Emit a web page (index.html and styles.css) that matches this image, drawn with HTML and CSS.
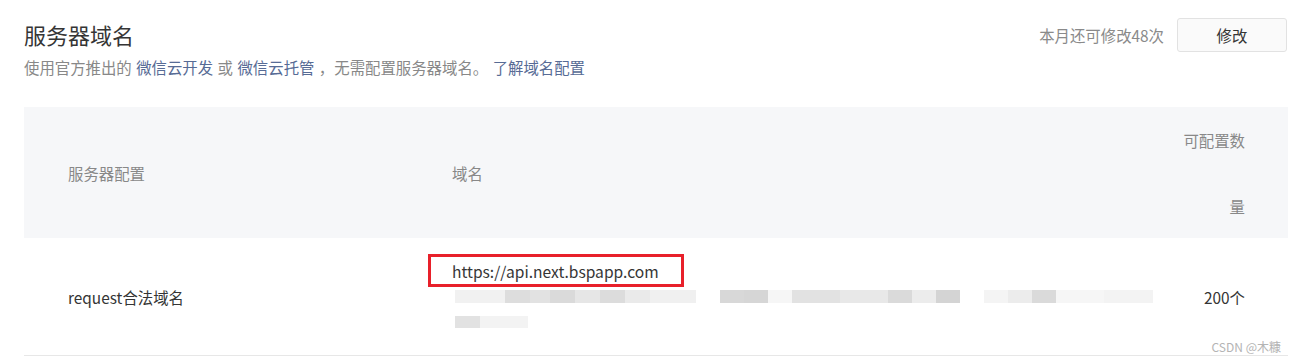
FILE: index.html
```html
<!DOCTYPE html>
<html lang="zh-CN">
<head>
<meta charset="utf-8">
<title>服务器域名</title>
<link rel="stylesheet" href="styles.css">
</head>
<body>
<div class="page">
  <div class="head">
    <div class="head-main">
      <h2 class="title">服务器域名</h2>
      <p class="desc">使用官方推出的 <a class="link">微信云开发</a> 或 <a class="link">微信云托管</a> ，无需配置服务器域名。 <a class="link">了解域名配置</a></p>
    </div>
    <div class="head-ops">
      <span class="quota">本月还可修改48次</span>
      <button class="btn">修改</button>
    </div>
  </div>

  <div class="table">
    <div class="row thead">
      <div class="cell c1">服务器配置</div>
      <div class="cell c2">域名</div>
      <div class="cell c3 wrap">可配置数量</div>
    </div>
    <div class="row tbody">
      <div class="cell c1">request合法域名</div>
      <div class="cell c2">
        <div class="domains">
          <div class="domain"><span class="mark">https://api.next.bspapp.com</span></div>
          <div class="domain"><span class="blur blur-a"></span></div>
          <div class="domain"><span class="blur blur-b"></span></div>
        </div>
      </div>
      <div class="cell c3">200个</div>
    </div>
    <div class="watermark">CSDN @木糠</div>
  </div>
</div>
</body>
</html>
```

FILE: styles.css
```css
* { box-sizing: border-box; }
html, body { margin: 0; padding: 0; background: #fff; }
body {
  font-family: "Noto Sans CJK SC", "Noto Sans", sans-serif;
  color: #353535;
  font-size: 15.4px;
}
.page { padding: 17px 2px 0 24px; }

.head { display: flex; justify-content: space-between; align-items: flex-start; }
.title {
  margin: 0;
  font-size: 22px;
  font-weight: normal;
  line-height: 34px;
  color: #353535;
}
.desc {
  margin: 5px 0 0;
  font-size: 15.4px;
  line-height: 22px;
  color: #888;
  word-spacing: 1px;
}
.link { color: #576b95; text-decoration: none; }

.head-ops { display: flex; align-items: center; gap: 13px; padding-top: 1px; }
.quota { color: #8a8a8a; font-size: 15.4px; }
.btn {
  width: 110px;
  height: 34px;
  margin-right: 1px;
  border: 1px solid #e2e2e2;
  border-radius: 3px;
  background: #fafafa;
  color: #353535;
  font-family: inherit;
  font-size: 15.4px;
  padding: 0;
}

.table { position: relative; margin-top: 29px; }
.row {
  display: grid;
  grid-template-columns: 384px 1fr 116px;
}
.thead { background: #f6f7f9; height: 131px; color: #888; }
.tbody { height: 118px; border-bottom: 1px solid #e7e7e7; }
.cell { display: flex; align-items: center; }
.c1 { padding-left: 44px; }
.c2 { padding-left: 44px; }
.c3 { padding: 0 43px 0 10px; justify-content: flex-end; text-align: right; }
.wrap { line-height: 66px; word-break: break-all; }

.domains { display: flex; flex-direction: column; }
.domain { height: 25px; line-height: 25px; display: flex; align-items: center; }
.mark {
  position: relative;
  font-size: 15.6px;
  color: #353535;
}
.mark::after {
  content: "";
  position: absolute;
  left: -24px;
  right: -25px;
  top: -5px;
  bottom: -3px;
  border: 3px solid #e8202a;
}
.blur { display: block; height: 13px; }
.blur-a {
  width: 698px;
  margin-left: 3px;
  background: linear-gradient(to right,
    #f1f1f1 0, #f1f1f1 50px,
    #dddddd 50px, #dddddd 75px,
    #e2e2e2 75px, #e2e2e2 95px,
    #dadada 95px, #dadada 120px,
    #e6e6e6 120px, #e6e6e6 145px,
    #dcdcdc 145px, #dcdcdc 170px,
    #eaeaea 170px, #eaeaea 195px,
    #f0f0f0 195px, #f0f0f0 241px,
    #ffffff 241px, #ffffff 265px,
    #d8d8d8 265px, #d8d8d8 289px,
    #d6d6d6 289px, #d6d6d6 313px,
    #f6f6f6 313px, #f6f6f6 337px,
    #e2e2e2 337px, #e2e2e2 385px,
    #e8e8e8 385px, #e8e8e8 433px,
    #dadada 433px, #dadada 457px,
    #ececec 457px, #ececec 481px,
    #d4d4d4 481px, #d4d4d4 505px,
    #ffffff 505px, #ffffff 529px,
    #f4f4f4 529px, #f4f4f4 553px,
    #ececec 553px, #ececec 577px,
    #dadada 577px, #dadada 601px,
    #f6f6f6 601px, #f6f6f6 649px,
    #f3f3f3 649px, #f3f3f3 698px);
}
.blur-b {
  width: 73px;
  height: 12px;
  margin-left: 3px;
  background: linear-gradient(to right,
    #e2e2e2 0, #e2e2e2 25px,
    #f3f3f3 25px, #f3f3f3 73px);
}

.watermark {
  position: absolute;
  right: 7px;
  bottom: 1px;
  font-size: 12px;
  color: #b4b4b4;
}
```
